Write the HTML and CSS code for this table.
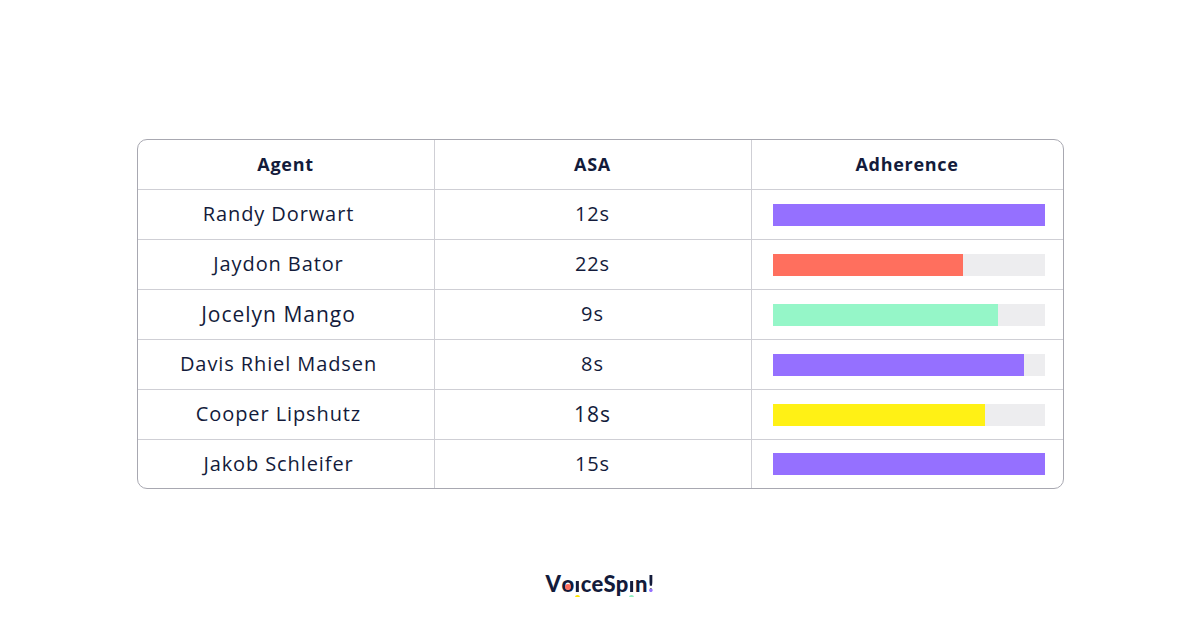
FILE: index.html
```html
<!DOCTYPE html>
<html lang="en">
<head>
<meta charset="utf-8">
<title>Agent adherence</title>
<link rel="stylesheet" href="styles.css">
</head>
<body>
<main class="page">
  <div class="table">
    <div class="row head">
      <div class="cell">Agent</div>
      <div class="cell">ASA</div>
      <div class="cell">Adherence</div>
    </div>
    <div class="row">
      <div class="cell">Randy Dorwart</div>
      <div class="cell">12s</div>
      <div class="cell bar-cell"><div class="track"><div class="fill purple" style="width:100%"></div></div></div>
    </div>
    <div class="row">
      <div class="cell">Jaydon Bator</div>
      <div class="cell">22s</div>
      <div class="cell bar-cell"><div class="track"><div class="fill coral" style="width:70%"></div></div></div>
    </div>
    <div class="row">
      <div class="cell big">Jocelyn Mango</div>
      <div class="cell">9s</div>
      <div class="cell bar-cell"><div class="track"><div class="fill mint" style="width:83%"></div></div></div>
    </div>
    <div class="row">
      <div class="cell">Davis Rhiel Madsen</div>
      <div class="cell">8s</div>
      <div class="cell bar-cell"><div class="track"><div class="fill purple" style="width:92.6%"></div></div></div>
    </div>
    <div class="row">
      <div class="cell">Cooper Lipshutz</div>
      <div class="cell big">18s</div>
      <div class="cell bar-cell"><div class="track"><div class="fill yellow" style="width:78.3%"></div></div></div>
    </div>
    <div class="row last">
      <div class="cell">Jakob Schleifer</div>
      <div class="cell">15s</div>
      <div class="cell bar-cell"><div class="track"><div class="fill purple" style="width:100%"></div></div></div>
    </div>
  </div>
  <div class="logo">V<span class="o">o</span><span class="di yel">i</span>ceSp<span class="di mnt">i</span>n<span class="bang">!</span></div>
</main>
</body>
</html>
```
FILE: styles.css
```css
html, body {
  margin: 0;
  padding: 0;
  background: #ffffff;
}
body {
  font-family: "Open Sans", Lato, sans-serif;
  color: #131b3b;
}
.page {
  display: flex;
  flex-direction: column;
  align-items: center;
  padding-top: 139px;
}
.table {
  width: 927px;
  box-sizing: border-box;
  border: 1px solid #a8a8b1;
  border-radius: 10px;
  overflow: hidden;
}
.row {
  display: grid;
  grid-template-columns: 297px 317px 1fr;
  height: 50px;
  box-sizing: border-box;
  border-bottom: 1px solid #cfcfd5;
}
.row.last {
  border-bottom: none;
  height: 48px;
}
.cell {
  display: flex;
  align-items: center;
  justify-content: center;
  padding-bottom: 2px;
  font-size: 20px;
  border-right: 1px solid #cfcfd5;
  letter-spacing: 0.9px;
}
.cell:first-child {
  padding-right: 14px;
}
.cell:last-child {
  border-right: none;
}
.cell.big {
  font-size: 21px;
  letter-spacing: 1px;
}
.head .cell {
  font-weight: 700;
  font-size: 18px;
  letter-spacing: 0.7px;
}
.head .cell:first-child {
  padding-right: 0;
}
.bar-cell {
  justify-content: flex-start;
  padding-left: 21px;
  padding-bottom: 0;
}
.track {
  width: 272px;
  height: 22px;
  background: #ededef;
  display: flex;
}
.fill {
  height: 100%;
}
.purple { background: #9570ff; }
.coral { background: #ff6f5e; }
.mint { background: #95f6c8; }
.yellow { background: #fff115; }

.logo {
  margin-top: 82px;
  font-family: Lato, sans-serif;
  font-size: 22px;
  font-weight: 900;
  letter-spacing: 0.4px;
  color: #131b3b;
  line-height: 26px;
}
.logo .o {
  position: relative;
  display: inline-block;
}
.logo .o::after {
  content: "";
  position: absolute;
  left: 50%;
  top: 60%;
  width: 6px;
  height: 6px;
  margin: -3px 0 0 -3px;
  border-radius: 50%;
  background: #ff6f5e;
}
.logo .di {
  position: relative;
  display: inline-block;
  color: transparent;
  background: linear-gradient(to bottom, transparent 0 38%, #131b3b 38%);
  -webkit-background-clip: text;
  background-clip: text;
}
.logo .di::after {
  content: "";
  position: absolute;
  left: 50%;
  bottom: -3px;
  width: 5px;
  height: 5px;
  margin-left: -2.5px;
  border-radius: 50%;
}
.logo .yel::after { background: #ffe600; }
.logo .mnt::after { background: #8ff0c0; }
.logo .bang {
  color: transparent;
  background: linear-gradient(to bottom, #131b3b 0 70%, #9570ff 70%);
  -webkit-background-clip: text;
  background-clip: text;
}
```
